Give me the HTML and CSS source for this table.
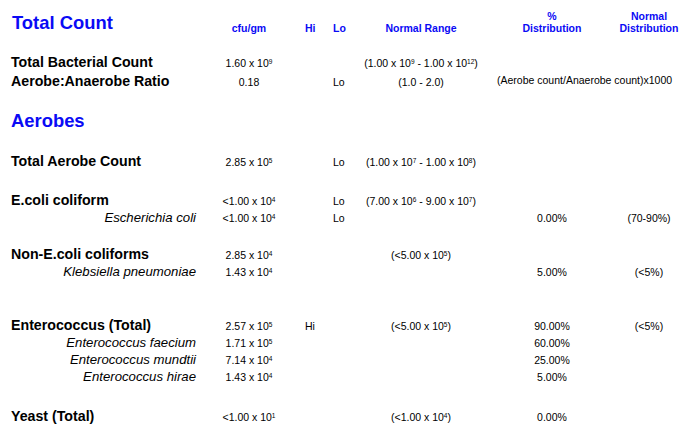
FILE: index.html
```html
<!DOCTYPE html>
<html>
<head>
<meta charset="utf-8">
<link rel="stylesheet" href="styles.css">
</head>
<body>
<div class="page">
  <div class="head">
    <div class="title">Total Count</div>
    <div class="h c2">cfu/gm</div>
    <div class="h hl c3">Hi</div>
    <div class="h hl c4">Lo</div>
    <div class="h c5">Normal Range</div>
    <div class="h c6">%<br>Distribution</div>
    <div class="h c7">Normal<br>Distribution</div>
  </div>

  <div class="group g20 tight">
    <div class="row">
      <div class="lbl">Total Bacterial Count</div>
      <div class="v">1.60 x 10<sup>9</sup></div>
      <div class="rng">(1.00 x 10<sup>9</sup> - 1.00 x 10<sup>12</sup>)</div>
    </div>
    <div class="row">
      <div class="lbl">Aerobe:Anaerobe Ratio</div>
      <div class="v">0.18</div>
      <div class="lo">Lo</div>
      <div class="rng">(1.0 - 2.0)</div>
      <div class="ratio">(Aerobe count/Anaerobe count)x1000</div>
    </div>
  </div>

  <div class="title sect">Aerobes</div>

  <div class="group g21">
    <div class="row">
      <div class="lbl">Total Aerobe Count</div>
      <div class="v">2.85 x 10<sup>5</sup></div>
      <div class="lo">Lo</div>
      <div class="rng">(1.00 x 10<sup>7</sup> - 1.00 x 10<sup>8</sup>)</div>
    </div>
  </div>

  <div class="group g22">
    <div class="row">
      <div class="lbl">E.coli coliform</div>
      <div class="v">&lt;1.00 x 10<sup>4</sup></div>
      <div class="lo">Lo</div>
      <div class="rng">(7.00 x 10<sup>6</sup> - 9.00 x 10<sup>7</sup>)</div>
    </div>
    <div class="row">
      <div class="sub">Escherichia coli</div>
      <div class="v">&lt;1.00 x 10<sup>4</sup></div>
      <div class="lo">Lo</div>
      <div class="pct">0.00%</div>
      <div class="nd">(70-90%)</div>
    </div>
  </div>

  <div class="group g20">
    <div class="row">
      <div class="lbl">Non-E.coli coliforms</div>
      <div class="v">2.85 x 10<sup>4</sup></div>
      <div class="rng">(&lt;5.00 x 10<sup>5</sup>)</div>
    </div>
    <div class="row">
      <div class="sub">Klebsiella pneumoniae</div>
      <div class="v">1.43 x 10<sup>4</sup></div>
      <div class="pct">5.00%</div>
      <div class="nd">(&lt;5%)</div>
    </div>
  </div>

  <div class="group g37">
    <div class="row">
      <div class="lbl">Enterococcus (Total)</div>
      <div class="v">2.57 x 10<sup>5</sup></div>
      <div class="hi">Hi</div>
      <div class="rng">(&lt;5.00 x 10<sup>5</sup>)</div>
      <div class="pct">90.00%</div>
      <div class="nd">(&lt;5%)</div>
    </div>
    <div class="row">
      <div class="sub">Enterococcus faecium</div>
      <div class="v">1.71 x 10<sup>5</sup></div>
      <div class="pct">60.00%</div>
    </div>
    <div class="row">
      <div class="sub">Enterococcus mundtii</div>
      <div class="v">7.14 x 10<sup>4</sup></div>
      <div class="pct">25.00%</div>
    </div>
    <div class="row">
      <div class="sub">Enterococcus hirae</div>
      <div class="v">1.43 x 10<sup>4</sup></div>
      <div class="pct">5.00%</div>
    </div>
  </div>

  <div class="group g23">
    <div class="row">
      <div class="lbl">Yeast (Total)</div>
      <div class="v">&lt;1.00 x 10<sup>1</sup></div>
      <div class="rng">(&lt;1.00 x 10<sup>4</sup>)</div>
      <div class="pct">0.00%</div>
    </div>
  </div>
</div>
</body>
</html>
```

FILE: styles.css
```css
html, body {
  margin: 0;
  padding: 0;
  background: #ffffff;
}

body {
  font-family: "Liberation Sans", Arial, sans-serif;
  color: #000000;
  font-size: 10.5px;
}

.page {
  width: 686px;
}

.head,
.row {
  display: grid;
  grid-template-columns: 200px 98px 28px 30px 130px 132px 62px;
}

.head {
  height: 34px;
  align-items: end;
}

.title {
  grid-column: 1;
  color: #0a0af5;
  font-weight: bold;
  font-size: 18.4px;
  line-height: 22px;
  padding-left: 12px;
}

.title.sect {
  margin-top: 20px;
  padding-left: 11px;
}

.h {
  color: #0a0af5;
  font-weight: bold;
  font-size: 10.5px;
  line-height: 12px;
  text-align: center;
  grid-row: 1;
}

.h.hl {
  text-align: left;
  padding-left: 7px;
}

.c2 { grid-column: 2; }
.c3 { grid-column: 3; }
.c4 { grid-column: 4; }
.c5 { grid-column: 5; }
.c6 { grid-column: 6; }
.c7 { grid-column: 7; }

.group.g20 { margin-top: 20px; }
.group.g21 { margin-top: 21px; }
.group.g22 { margin-top: 22px; }
.group.g23 { margin-top: 23px; }
.group.g37 { margin-top: 37px; }

.group.tight {
  display: flex;
  flex-direction: column;
  gap: 2px;
}

.row {
  height: 17px;
  line-height: 17px;
  align-items: baseline;
  white-space: nowrap;
}

.row > * {
  grid-row: 1;
}

.lbl {
  grid-column: 1;
  font-weight: bold;
  font-size: 14.2px;
  padding-left: 11px;
}

.sub {
  grid-column: 1;
  font-style: italic;
  font-size: 13.2px;
  text-align: right;
  padding-right: 4px;
}

.v {
  grid-column: 2;
  text-align: center;
}

.hi {
  grid-column: 3;
  padding-left: 7px;
}

.lo {
  grid-column: 4;
  padding-left: 7px;
}

.rng {
  grid-column: 5;
  text-align: center;
}

.pct {
  grid-column: 6;
  text-align: center;
}

.nd {
  grid-column: 7;
  text-align: center;
}

.ratio {
  grid-column: 6 / 8;
  align-self: start;
  line-height: 15px;
  padding-left: 11px;
}

sup {
  font-size: 6.5px;
  line-height: 0;
  vertical-align: 3.5px;
}
```
